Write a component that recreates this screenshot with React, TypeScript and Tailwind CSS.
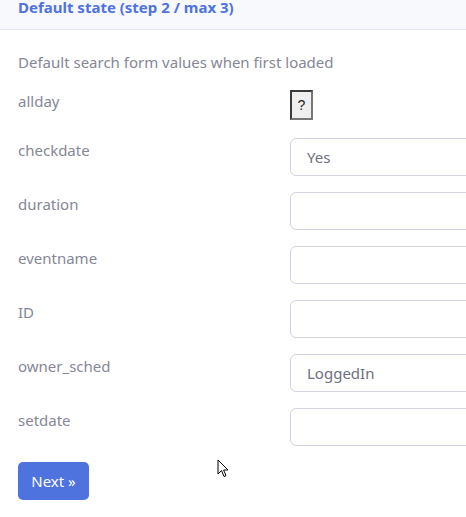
const rows: { name: string; value: string }[] = [
  { name: 'checkdate', value: 'Yes' },
  { name: 'duration', value: '' },
  { name: 'eventname', value: '' },
  { name: 'ID', value: '' },
  { name: 'owner_sched', value: 'LoggedIn' },
  { name: 'setdate', value: '' },
];

export default function App() {
  return (
    <div className="relative w-[466px] h-[517px] overflow-hidden bg-white font-['Noto_Sans',sans-serif]">
      <div className="w-[620px]">
        {/* card header, scrolled partly out of view */}
        <div className="h-[30px] overflow-hidden bg-[#f8f9fc] border-b border-[#e3e6f0] px-[18px]">
          <h6 className="-mt-[2px] text-[15px] leading-[19px] font-bold text-[#4e73df]">Default state (step 2 / max 3)</h6>
        </div>
        <div className="px-[18px] pt-[20px]">
          <p className="text-[15px] leading-[24px] text-[#858796] mb-[15px]">Default search form values when first loaded</p>
          <div className="flex mb-[16px] h-[33px]">
            <label className="w-[272px] text-[15px] leading-[24px] text-[#858796]">allday</label>
            <div className="pt-[1px]">
              <button className="w-[23px] h-[30px] bg-[#efefef] border-2 border-[#767676] border-l-[#3b3b3b] border-t-[#3b3b3b] text-[14px] font-['Liberation_Sans',sans-serif] text-[#222]">?</button>
            </div>
          </div>
          {rows.map((r) => (
            <div key={r.name} className="flex mb-[16px]">
              <label className="w-[272px] shrink-0 text-[15px] leading-[24px] text-[#858796]">{r.name}</label>
              <input
                readOnly
                value={r.value}
                className="w-[300px] h-[38px] px-[16px] border border-[#d1d3e2] rounded-[6px] text-[15px] text-[#6e707e] outline-none"
              />
            </div>
          ))}
          <button className="w-[71px] h-[38px] rounded-[5px] bg-[#4e73df] text-white text-[15px]">Next »</button>
        </div>
      </div>
      {/* mouse pointer */}
      <svg className="absolute left-[217px] top-[459px]" width="13" height="20" viewBox="0 0 13 20">
        <path d="M1 1 L1 15 L4.5 11.5 L7 17.5 L9 16.7 L6.6 11 L11 11 Z" fill="white" stroke="black" strokeWidth="1" />
      </svg>
    </div>
  );
}
